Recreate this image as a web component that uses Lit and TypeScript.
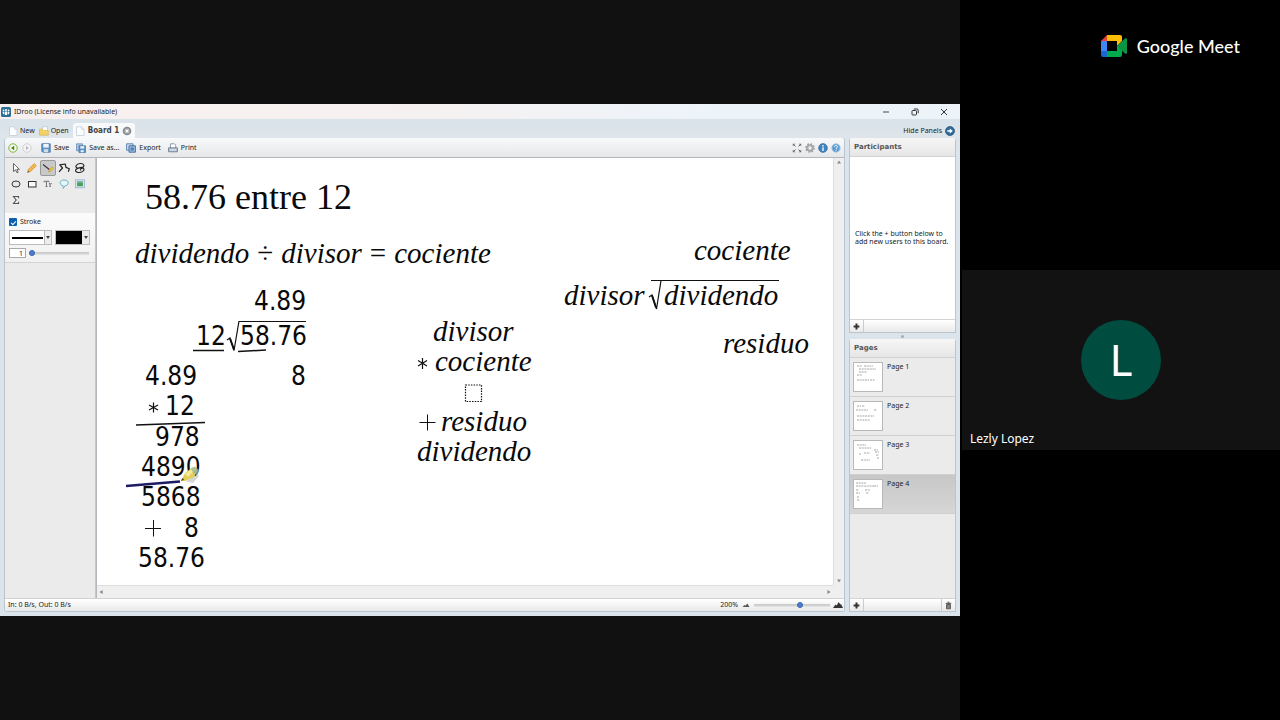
import { LitElement, html, css, svg, nothing } from "lit";
import { customElement, property } from "lit/decorators.js";
import { classMap } from "lit/directives/class-map.js";

interface Mark {
  x: number;
  y: number;
  kind: "num" | "math" | "title";
  parts: string[];
}

const MARKS: Mark[] = [
  { x: 48, y: 23, kind: "title", parts: ["58.76 entre 12"] },
  { x: 38, y: 79, kind: "math", parts: ["dividendo", "÷", "divisor", "=", "cociente"] },
  { x: 597, y: 76, kind: "math", parts: ["cociente"] },
  { x: 467, y: 121, kind: "math", parts: ["divisor"] },
  { x: 567, y: 121, kind: "math", parts: ["dividendo"] },
  { x: 626, y: 169, kind: "math", parts: ["residuo"] },
  { x: 336, y: 157, kind: "math", parts: ["divisor"] },
  { x: 338, y: 187, kind: "math", parts: ["cociente"] },
  { x: 344, y: 247, kind: "math", parts: ["residuo"] },
  { x: 320, y: 277, kind: "math", parts: ["dividendo"] },
  { x: 157, y: 127, kind: "num", parts: ["4.89"] },
  { x: 99, y: 162, kind: "num", parts: ["12"] },
  { x: 143, y: 162, kind: "num", parts: ["58.76"] },
  { x: 48, y: 202, kind: "num", parts: ["4.89"] },
  { x: 194, y: 202, kind: "num", parts: ["8"] },
  { x: 68, y: 232, kind: "num", parts: ["12"] },
  { x: 58, y: 263, kind: "num", parts: ["978"] },
  { x: 44, y: 293, kind: "num", parts: ["4890"] },
  { x: 44, y: 323, kind: "num", parts: ["5868"] },
  { x: 87, y: 354, kind: "num", parts: ["8"] },
  { x: 41, y: 384, kind: "num", parts: ["58.76"] },
];

const sheet = svg`<path d="M1.5 .8h5l2.500 2.500v6.200h-7.500z" fill="#fdfeff" stroke="#c3cdd8" stroke-width=".8"/><path d="M6.500 .8v2.500h2.500" fill="#e4ebf2" stroke="#c3cdd8" stroke-width=".6"/>`;
const floppy = svg`<path d="M.8.8h8.400v8.400h-7.400l-1-1z" fill="#5f93c8" stroke="#3e6ea3" stroke-width=".8"/><rect x="2.300" y="1" width="5.400" height="3.600" fill="#eef4fa"/><rect x="2.800" y="6.200" width="4.400" height="3" fill="#d5dfe9"/>`;

const ICONS: Record<string, unknown> = {
  app: svg`<rect width="10" height="10" rx="1.500" fill="#2a7096"/><g fill="#fff"><circle cx="2.500" cy="3.300" r=".9"/><circle cx="5" cy="3" r="1"/><circle cx="7.500" cy="3.300" r=".9"/><path d="M1.500 4.700h1.900v2.600h-1.200zM4 4.500h2v3.500h-2zM6.600 4.700h1.900l-.7 2.600h-1.200z"/></g>`,
  page: sheet,
  folder: svg`<path d="M3.500.8h5v6h-5z" fill="#fff" stroke="#a9bccd" stroke-width=".6"/><path d="M.5 3.200h3l.8 1.300h5v4.700h-8.800z" fill="#f1d264" stroke="#d9b03e" stroke-width=".6"/>`,
  close: svg`<circle cx="5" cy="5" r="4.300" fill="#85898d"/><circle cx="5" cy="5" r="2.900" fill="#9fa2a5"/><path d="M3.600 3.600l2.800 2.800m0-2.800l-2.800 2.800" stroke="#fff" stroke-width="1.300"/>`,
  back: svg`<circle cx="5" cy="5" r="4.200" fill="#f4fbe9" stroke="#7cb342" stroke-width="1"/><path d="M6.200 2.800v4.400l-3.200-2.200z" fill="#45821a"/>`,
  forward: svg`<circle cx="5" cy="5" r="4.200" fill="#f5f5f5" stroke="#c9cbcd" stroke-width=".9"/><path d="M4 2.900v4.200l3-2.100z" fill="#b5b7b9"/>`,
  save: floppy,
  saveas: svg`<path d="M.5.8h6v7h-6z" fill="#a7c3e0" stroke="#5c87b5" stroke-width=".7"/><path d="M3 2.800h6.500v6.700h-6.500z" fill="#5f93c8" stroke="#3e6ea3" stroke-width=".7"/><path d="M4.300 3.200h3.900v2.400h-3.900zM4.700 7.200h3v2h-3z" fill="#eef4fa"/>`,
  export: svg`<path d="M.6.800h6.400v6.400h-6.400z" fill="#cfe0f2" stroke="#4d78a8" stroke-width=".9"/><path d="M3 2.800h6.400v6.400h-6.400z" fill="#9fbfe2" stroke="#3b689c" stroke-width=".9"/><path d="M4.600 4.400h3.200v3.200h-3.200z" fill="#4b80bb"/>`,
  print: svg`<path d="M2.500 5v-4.200h4l1.200 1.200v3" fill="#fff" stroke="#7488a0" stroke-width=".8"/><path d="M.6 4.800h8.800v4h-8.800z" fill="#b7c2cf" stroke="#63748a" stroke-width=".8"/><path d="M2 7h6" stroke="#eef" stroke-width=".9"/>`,
  full: svg`<path d="M.8 3.300v-2.500h2.500zM6.700 .8h2.500v2.500zM9.200 6.700v2.500h-2.500zM3.300 9.200h-2.500v-2.500z" fill="#6a6a6a"/><path d="M1.500 1.500l2 2M8.500 1.500l-2 2M8.500 8.500l-2-2M1.500 8.500l2-2" stroke="#6a6a6a" stroke-width="1"/>`,
  gear: svg`<circle cx="5" cy="5" r="3.300" fill="#bbb" stroke="#999" stroke-width="1"/><circle cx="5" cy="5" r="4.200" fill="none" stroke="#999" stroke-width="1.200" stroke-dasharray="1.700 1.600"/><circle cx="5" cy="5" r="1.400" fill="#f2f2f2"/>`,
  info: svg`<circle cx="5" cy="5" r="4.400" fill="#3f83c0" stroke="#2c6297" stroke-width=".6"/><path d="M5 2.100v1.300M5 4.300v3.600" stroke="#fff" stroke-width="1.300"/>`,
  help: svg`<circle cx="5" cy="5" r="4.200" fill="#5d9bd3" stroke="#a9c6e2" stroke-width=".8"/><path d="M3.600 3.900c0-2 2.900-1.900 2.900-.2 0 1.100-1.400 1.100-1.400 2.200M5.100 6.800v1" fill="none" stroke="#fff" stroke-width="1"/>`,
  hide: svg`<circle cx="5" cy="5" r="4.500" fill="#2f6c9c" stroke="#214f75" stroke-width=".7"/><path d="M2.300 4.200h2.500v-1.700l3 2.500-3 2.500v-1.700h-2.500z" fill="#fff"/>`,
  min: svg`<path d="M2 5h6" stroke="#333" stroke-width=".9"/>`,
  max: svg`<rect x="2" y="3.500" width="4.500" height="4.500" rx=".8" fill="none" stroke="#222" stroke-width=".9"/><path d="M3.800 2h3.200a1.200 1.200 0 0 1 1.200 1.200v3" fill="none" stroke="#222" stroke-width=".9"/>`,
  exit: svg`<path d="M2 2l6 6m0-6l-6 6" stroke="#222" stroke-width=".9"/>`,
  plus: svg`<path d="M5 1.800v6.400M1.800 5h6.400" stroke="#333" stroke-width="2.200"/>`,
  bin: svg`<path d="M2 2.600h6M4 1.300h2" stroke="#444" stroke-width="1.100"/><path d="M2.800 3.900h4.400v4.800h-4.400z" fill="#aaa" stroke="#444" stroke-width=".9"/><path d="M4.200 4v4M5.800 4v4" stroke="#444" stroke-width=".7"/>`,
  hillS: svg`<path d="M1.500 7l2-2 1 .8 1.800-2.300 2.200 3.500z" fill="#555"/>`,
  hillL: svg`<path d="M0 8l2.500-3.500 1.200 1 2-3.500 1.600 2.500.7-.5 2 4z" fill="#333"/>`,
  up: svg`<path d="M5 3l2.500 4h-5z" fill="#8a8a8a"/>`,
  down: svg`<path d="M5 7l2.500-4h-5z" fill="#8a8a8a"/>`,
  left: svg`<path d="M3 5l4-2.500v5z" fill="#8a8a8a"/>`,
  right: svg`<path d="M7 5l-4-2.500v5z" fill="#8a8a8a"/>`,
};

const TOOLS: { name: string; icon: unknown }[] = [
  { name: "Select", icon: svg`<path d="M3.500 1.500v8l2-1.700 1.500 3 1.200-.6-1.400-2.900h2.600z" fill="#fff" stroke="#555" stroke-width=".9"/>` },
  { name: "Pencil", icon: svg`<path d="M1.500 10.500l1-3.200 5.700-5.700 2.100 2.100-5.600 5.700z" fill="#f3b84b" stroke="#cf8c2a" stroke-width=".7"/><path d="M1.500 10.500l.5-1.800 1.300 1.200z" fill="#555"/>` },
  { name: "Line", icon: svg`<path d="M1 2.500l7 5.500" stroke="#333" stroke-width="1.100"/><path d="M6.500 9.800l.8-2.300 2.900-2.700 1.500 1.500-2.900 2.800z" fill="#eec04c" stroke="#b98a22" stroke-width=".5"/>` },
  { name: "Polyline", icon: svg`<path d="M1 9.800L4.500 6 1.800 2.800 7.200 2 8 5.400 11.300 6.800 10.300 9.800" fill="none" stroke="#222" stroke-width="1.200" stroke-linejoin="round"/>` },
  { name: "Curve", icon: svg`<path d="M3.300 5.800C.5 5.500 2 1.800 6 1.500c4.500-.3 5 3.600 2 3.900C5 5.700 1.600 6.500 1.600 8.600c0 2.600 5 2.200 7.200.8 2.200-1.500 1.200-3.700-.8-3.200-1.500.4-1.700 1.600-1 2.200" fill="none" stroke="#222" stroke-width="1.100"/>` },
  { name: "Ellipse", icon: svg`<ellipse cx="6" cy="6" rx="4" ry="3" fill="none" stroke="#333"/>` },
  { name: "Rectangle", icon: svg`<rect x="2.500" y="3.500" width="7.500" height="5.500" fill="#f8f8f8" stroke="#333"/>` },
  { name: "Text", icon: svg`<path d="M2 4.300v-1h5v1M4.500 3.300v5.200M3.500 8.500h2M7 5.500h1v3M7.500 8.500h1.300M8 6.500c.5-1 1-1.100 1.800-.9" fill="none" stroke="#666" stroke-width=".9"/>` },
  { name: "Callout", icon: svg`<path d="M6 2c5.500 0 5.500 5.500.8 5.800l-1.500 2.700-.3-2.800c-4-.7-4-5.700 1-5.700z" fill="#e3f7fb" stroke="#62aab8" stroke-width=".9"/>` },
  { name: "Image", icon: svg`<rect x="1.500" y="1.800" width="9" height="8" fill="#dbe8f5" stroke="#94aecb" stroke-width=".8"/><rect x="3" y="3.300" width="6" height="5" fill="#4da158"/><path d="M3 3.300h6v1.500h-6z" fill="#7bb8a4"/>` },
  { name: "Formula", icon: svg`<path d="M8.500 4.200v-1.700h-5l2.700 3.500-2.700 3.500h5v-1.700" fill="none" stroke="#555" stroke-width="1.100"/>` },
];

const THUMBS = [
  "M3 3h5M10 3h9M5 6h17M3 12h5M3 17h12M16 17h5M5 9h8",
  "M3 4h4M8 4h3M2 8h12M20 8h3M3 14h17M3 18h13",
  "M3 4h9M5 7h12M10 12h6M5 13h2M7 19h9M20 9h4M21 11h4M22 14h3M23 17h2",
  "M2 3h10M2 6h18M20 6h4M2 10h3M11 10h5M2 13h4M12 13h3M3 17h2M3 20h3",
];

@customElement("ui-icon")
export class UiIcon extends LitElement {
  @property() name = "";
  static styles = css`
    :host { display: block; flex: none; width: 10px; height: 10px; }
    svg { display: block; width: 100%; height: 100%; }
  `;
  render() {
    return html`<svg viewBox="0 0 10 10" aria-hidden="true">${ICONS[this.name]}</svg>`;
  }
}

@customElement("board-canvas")
export class BoardCanvas extends LitElement {
  static styles = css`
    :host { display: block; position: relative; min-height: 427px; background: #fff; overflow: hidden; color: #0a0a0a; }
    .mark { position: absolute; display: flex; gap: 8px; white-space: pre; }
    .title { font: 36px/32px "Liberation Serif", serif; }
    .math { font: italic 29px/32px "Liberation Serif", serif; }
    .num { font: 26px/32px "DejaVu Sans Condensed", "DejaVu Sans", sans-serif; }
    .op { font-style: normal; }
    .ink { position: absolute; left: 0; top: 0; width: 736px; height: 428px; }
  `;
  render() {
    return html`
      ${MARKS.map((m) => html`<div class=${"mark " + m.kind} style=${`left:${m.x}px;top:${m.y}px`}>${m.parts.map(
        (p) => html`<span class=${classMap({ op: p === "÷" || p === "=" })}>${p}</span>`)}</div>`)}
      <svg class="ink" viewBox="0 0 736 428" aria-hidden="true">
        <g fill="none" stroke="#111" stroke-width="1">
          <path d="M142 163.500h67M554 122.500h128"/>
          <path d="M130 182l3-2 4 12.500 5-29.500M552 139l3-2 4.500 14 4.500-28.500" stroke-width="1.200"/>
          <path d="M133 180.500l4 11M555 137.500l4 12" stroke-width="2"/>
          <path d="M96 192.500h31M141 193.500l28-1.500M39 267l69-2.500" stroke-width="1.500"/>
          <path d="M48 370.500h16M56.500 362v16.500M322.500 264.500h16M330.500 256.500v16" />
          <path d="M56.500 244.500v10M52 247l9 5M52 252l9-5M325.500 200v11M321 202.500l9 5.500M321 208l9-5.500" stroke-width="1.200"/>
          <rect x="368.500" y="227" width="16" height="16.500" stroke-width="1.200" stroke-dasharray="1.500 1.200"/>
        </g>
        <path d="M29 328l54-4.500" stroke="#1d1b63" stroke-width="2.500"/>
        <path d="M89 323.500l7 1.500 6-7-4-3z" fill="#000" opacity=".16"/>
        <path d="M84 323l4-8 8-6 4.500 3.500-3.500 6.500-9 4z" fill="#e2cf57"/>
        <path d="M88 316l8-6 2 2-7 7z" fill="#f5ea95"/>
        <path d="M94 310.500l4-2 4 3.500-2 5-4-2z" fill="#9fb59a" opacity=".8"/>
        <path d="M84 323l1.300-3 2 1.800z" fill="#554a17"/>
      </svg>`;
  }
}

@customElement("app-root")
export class AppRoot extends LitElement {
  static styles = css`
    :host { display: grid; grid-template-columns: 3fr 1fr; min-height: 100vh; background: #000; color: #222; font: 7px/10px "Noto Sans", sans-serif; }
    * { box-sizing: border-box; }
    button { font: inherit; color: inherit; background: none; border: 0; padding: 0; margin: 0; display: flex; align-items: center; gap: 3px; white-space: nowrap; }
    h2 { margin: 0; font: bold 7px/17px "DejaVu Sans", sans-serif; color: #555; padding: 1px 4px 0; background: linear-gradient(#f6f6f6, #e6e6e6); border-bottom: 1px solid #cfd3d6; }
    .share { background: #111; display: flex; flex-direction: column; justify-content: center; min-width: 0; }
    .window { background: #dce4eb; display: flex; flex-direction: column; }
    .titlebar { display: flex; align-items: center; height: 15px; gap: 3px; padding: 0 11px 0 1px; background: linear-gradient(90deg, #f8f0ef, #f6f1f1 45%, #ecf4fa 75%); }
    .titlebar span { flex: 1; }
    .winbtns { display: flex; gap: 19px; }
    .tabs { display: flex; align-items: flex-end; height: 19px; padding: 0 5px 0 8px; background: linear-gradient(#d9e3ea, #dfe5ea); }
    .tabs button { height: 15px; }
    .tabs .new { margin-right: 4px; gap: 2px; }
    .tabs .open { gap: 2px; }
    .tab { display: flex; align-items: center; gap: 3px; height: 15px; margin-left: 4px; padding: 0 3px 0 2px; background: #f8f9fa; border-radius: 3px 3px 0 0; font: bold 8px/15px "DejaVu Sans Condensed", "DejaVu Sans", sans-serif; color: #444; }
    .grow { flex: 1; }
    .work { display: flex; gap: 4px; padding: 0 4px 4px; }
    .main { flex: 1; min-width: 0; display: flex; flex-direction: column; border: 1px solid #b9c5cf; border-top: 0; border-radius: 3px; background: #ececec; }
    .toolbar { display: flex; align-items: center; height: 20px; padding: 0 3px; background: linear-gradient(#f8f9fa, #e6e7e8); border-bottom: 1px solid #b4b8bc; border-radius: 3px 3px 0 0; }
    .actions { display: flex; gap: 7px; }
    .nav { display: flex; gap: 4px; margin-right: 2px; }
    .views { display: flex; gap: 3px; }
    .middle { display: flex; }
    .tools { width: 91px; flex: none; border-right: 1px solid #c5c8ca; background: #ebebeb; }
    .palette { display: grid; grid-template-columns: repeat(5, 16px); grid-auto-rows: 16px; padding: 2px 3px 5px; }
    .palette button { justify-content: center; border: 1px solid transparent; border-radius: 2px; }
    .palette .on { background: #c9c9c9; border-color: #999; }
    .palette svg { width: 12px; height: 12px; flex: none; }
    .stroke { display: flex; flex-direction: column; gap: 3px; padding: 4px; background: linear-gradient(#fbfbfb, #f1f1f1); border-bottom: 1px solid #d3d3d3; }
    .check { display: flex; align-items: center; gap: 3px; height: 10px; }
    .check input { appearance: none; width: 8px; height: 8px; margin: 0; border-radius: 1px; background: #0b5fae; display: grid; place-items: center; }
    .check input:checked::after { content: ""; width: 4px; height: 2px; border: solid #fff; border-width: 0 0 1px 1px; rotate: -45deg; }
    .pair { display: flex; gap: 3px; align-items: center; }
    .combo { position: relative; display: flex; height: 15px; }
    .combo select { appearance: none; width: 43px; height: 15px; border: 1px solid #bbb; border-radius: 0; padding: 0; background: linear-gradient(#000, #000) 2px 6px / 31px 2px no-repeat, linear-gradient(90deg, #fff 34px, #bbb 34px, #bbb 35px, #ececec 35px); }
    .combo .color { width: 35px; background: linear-gradient(#000, #000) 0 0 / 26px 13px no-repeat, #ececec; }
    .combo::after { content: ""; position: absolute; right: 2px; top: 6px; border: solid transparent; border-width: 3px 2px 0; border-top-color: #444; }
    .size { width: 17px; height: 10px; border: 1px solid #aaa; padding: 0 2px; font: inherit; line-height: 8px; text-align: right; background: #fff; color: #222; }
    .range { appearance: none; margin: 0; height: 8px; min-width: 0; background: linear-gradient(#c4c4c4, #e4e4e4) center / 100% 3px no-repeat; }
    .range::-webkit-slider-thumb { appearance: none; width: 6px; height: 6px; border-radius: 50%; background: #4d7fd0; border: 1px solid #3763ac; }
    .width { width: 60px; }
    .zoom { width: 76px; }
    .view { flex: 1; min-width: 0; display: grid; grid-template-columns: minmax(0, 1fr) 11px; grid-template-rows: auto 13px; border-left: 1px solid #b4b8bc; background: #efefef; }
    .vbar { display: flex; flex-direction: column; justify-content: space-between; align-items: center; border-left: 1px solid #ddd; }
    .hbar { display: flex; justify-content: space-between; align-items: center; border-top: 1px solid #ddd; }
    .vbar ui-icon, .hbar ui-icon { width: 8px; height: 8px; }
    .status { display: flex; align-items: center; gap: 4px; height: 13px; padding: 0 1px 0 3px; background: linear-gradient(#fff, #e9e9e9); border-top: 1px solid #d2d2d2; }
    .zoomset { display: flex; align-items: center; gap: 3px; }
    .side { flex: none; width: 107px; display: flex; flex-direction: column; }
    .panel { display: flex; flex-direction: column; border: 1px solid #b9c5cf; border-top: 0; border-radius: 3px 3px 0 0; background: #ebebeb; }
    .people { background: #fff; }
    .people p { margin: 0; height: 162px; display: flex; align-items: center; padding: 0 5px; line-height: 8px; }
    .grip { height: 6px; display: grid; place-items: center; }
    .grip i { width: 3px; height: 3px; border-radius: 50%; background: #a3adb6; }
    .foot { display: flex; justify-content: space-between; height: 13px; background: linear-gradient(#fff, #e9e9e9); border-top: 1px solid #d2d2d2; }
    .foot button { width: 14px; justify-content: center; border-right: 1px solid #ccc; }
    .foot .del { border-right: 0; border-left: 1px solid #ccc; }
    .foot ui-icon { width: 9px; height: 9px; }
    .pages { flex: 1; }
    .list { list-style: none; margin: 0; padding: 0; flex: 1; }
    .list button { width: 100%; height: 39px; align-items: flex-start; gap: 4px; padding: 4px 3px; border-bottom: 1px solid #d0d0d0; }
    .list .on { background: linear-gradient(#c7c7c7, #d6d6d6); }
    .thumb { width: 30px; height: 30px; background: #fff; border: 1px solid #b8b8b8; }
    .call { display: grid; grid-template-rows: 1fr auto 1fr; min-width: 0; }
    .brand { display: flex; justify-content: flex-end; align-items: flex-start; gap: 9px; padding: 34px 40px 0; color: #fff; font: 500 18px/25px Lato, sans-serif; }
    .logo { width: 27px; height: 24px; }
    .tile { margin-left: 2px; height: 180px; background: #121212; display: grid; grid-template-rows: 1fr auto 1fr; justify-items: center; color: #fff; }
    .avatar { grid-row: 2; width: 80px; height: 80px; border-radius: 50%; background: #004d40; text-align: center; font: 44px/78px "Noto Sans", sans-serif; }
    .name { grid-row: 3; justify-self: start; align-self: end; padding: 0 8px 3px; font: 12px/17px "Noto Sans", sans-serif; }
  `;

  private action(icon: string, label: string) {
    return html`<button type="button"><ui-icon name=${icon}></ui-icon>${label}</button>`;
  }
  private glyph(icon: string, label: string, cls = "") {
    return html`<button type="button" class=${cls} aria-label=${label}><ui-icon name=${icon}></ui-icon></button>`;
  }

  render() {
    return html`
      <main class="share">
        <div class="window">
          <header class="titlebar">
            <ui-icon name="app"></ui-icon><span>IDroo (License info unavailable)</span>
            <div class="winbtns">${this.glyph("min", "Minimize")}${this.glyph("max", "Restore")}${this.glyph("exit", "Close")}</div>
          </header>
          <nav class="tabs">
            <button type="button" class="new"><ui-icon name="page"></ui-icon>New</button>
            <button type="button" class="open"><ui-icon name="folder"></ui-icon>Open</button>
            <div class="tab"><ui-icon name="page"></ui-icon><span>Board 1</span>${this.glyph("close", "Close board")}</div>
            <div class="grow"></div>
            <button type="button">Hide Panels<ui-icon name="hide"></ui-icon></button>
          </nav>
          <div class="work">
            <section class="main">
              <div class="toolbar">
                <div class="actions">
                  <div class="nav">${this.glyph("back", "Undo")}${this.glyph("forward", "Redo")}</div>
                  ${this.action("save", "Save")}${this.action("saveas", "Save as...")}${this.action("export", "Export")}${this.action("print", "Print")}
                </div>
                <div class="grow"></div>
                <div class="views">${this.glyph("full", "Full screen")}${this.glyph("gear", "Settings")}${this.glyph("info", "Information")}${this.glyph("help", "Help")}</div>
              </div>
              <div class="middle">
                <aside class="tools">
                  <div class="palette">
                    ${TOOLS.map((t, i) => html`<button type="button" aria-label=${t.name} class=${i === 2 ? "on" : nothing}><svg viewBox="0 0 12 12">${t.icon}</svg></button>`)}
                  </div>
                  <div class="stroke">
                    <label class="check"><input type="checkbox" checked />Stroke</label>
                    <div class="pair">
                      <div class="combo"><select aria-label="Line style"><option></option></select></div>
                      <div class="combo"><select class="color" aria-label="Line color"><option></option></select></div>
                    </div>
                    <div class="pair">
                      <input class="size" type="text" aria-label="Line width" value="1" />
                      <input class="range width" type="range" aria-label="Line width slider" min="1" max="20" value="1" />
                    </div>
                  </div>
                </aside>
                <div class="view">
                  <board-canvas></board-canvas>
                  <div class="vbar"><ui-icon name="up"></ui-icon><ui-icon name="down"></ui-icon></div>
                  <div class="hbar"><ui-icon name="left"></ui-icon><ui-icon name="right"></ui-icon></div>
                </div>
              </div>
              <footer class="status">
                <span>In: 0 B/s, Out: 0 B/s</span>
                <div class="grow"></div>
                <div class="zoomset"><span>200%</span><ui-icon name="hillS"></ui-icon>
                  <input class="range zoom" type="range" aria-label="Zoom" min="0" max="100" value="62" />
                  <ui-icon name="hillL"></ui-icon></div>
              </footer>
            </section>
            <aside class="side">
              <section class="panel people">
                <h2>Participants</h2>
                <p>Click the + button below to add new users to this board.</p>
                <div class="foot">${this.glyph("plus", "Add participant")}</div>
              </section>
              <div class="grip"><i></i></div>
              <section class="panel pages">
                <h2>Pages</h2>
                <ul class="list">
                  ${THUMBS.map((d, i) => html`<li><button type="button" class=${i === 3 ? "on" : nothing}>
                    <svg class="thumb" viewBox="0 0 28 28" aria-hidden="true"><path d=${d} stroke="#777" stroke-width=".8" stroke-dasharray="2 .7" opacity=".8"/></svg>Page ${i + 1}</button></li>`)}
                </ul>
                <div class="foot">${this.glyph("plus", "Add page")}${this.glyph("bin", "Delete page", "del")}</div>
              </section>
            </aside>
          </div>
        </div>
      </main>
      <aside class="call">
        <div class="brand">
          <svg class="logo" viewBox="0 0 27 24" aria-hidden="true">
            <path d="M6 1h13a2 2 0 0 1 2 2v4l-5 5v-5h-10z" fill="#fbbc04"/>
            <path d="M6 1v6h-6z" fill="#ea4335"/>
            <path d="M0 7h6v10h-6z" fill="#4285f4"/>
            <path d="M0 17h6v6h-4a2 2 0 0 1-2-2z" fill="#1967d2"/>
            <path d="M6 17h10v-5l5-4v13a2 2 0 0 1-2 2h-13z" fill="#00a94b"/>
            <path d="M16 12l8-7.500c.8-.7 2-.3 2 .8v13.500c0 1-1.200 1.500-2 .8z" fill="#0a9444"/>
          </svg>
          <span>Google Meet</span>
        </div>
        <section class="tile">
          <div class="avatar">L</div>
          <div class="name">Lezly Lopez</div>
        </section>
      </aside>`;
  }
}
